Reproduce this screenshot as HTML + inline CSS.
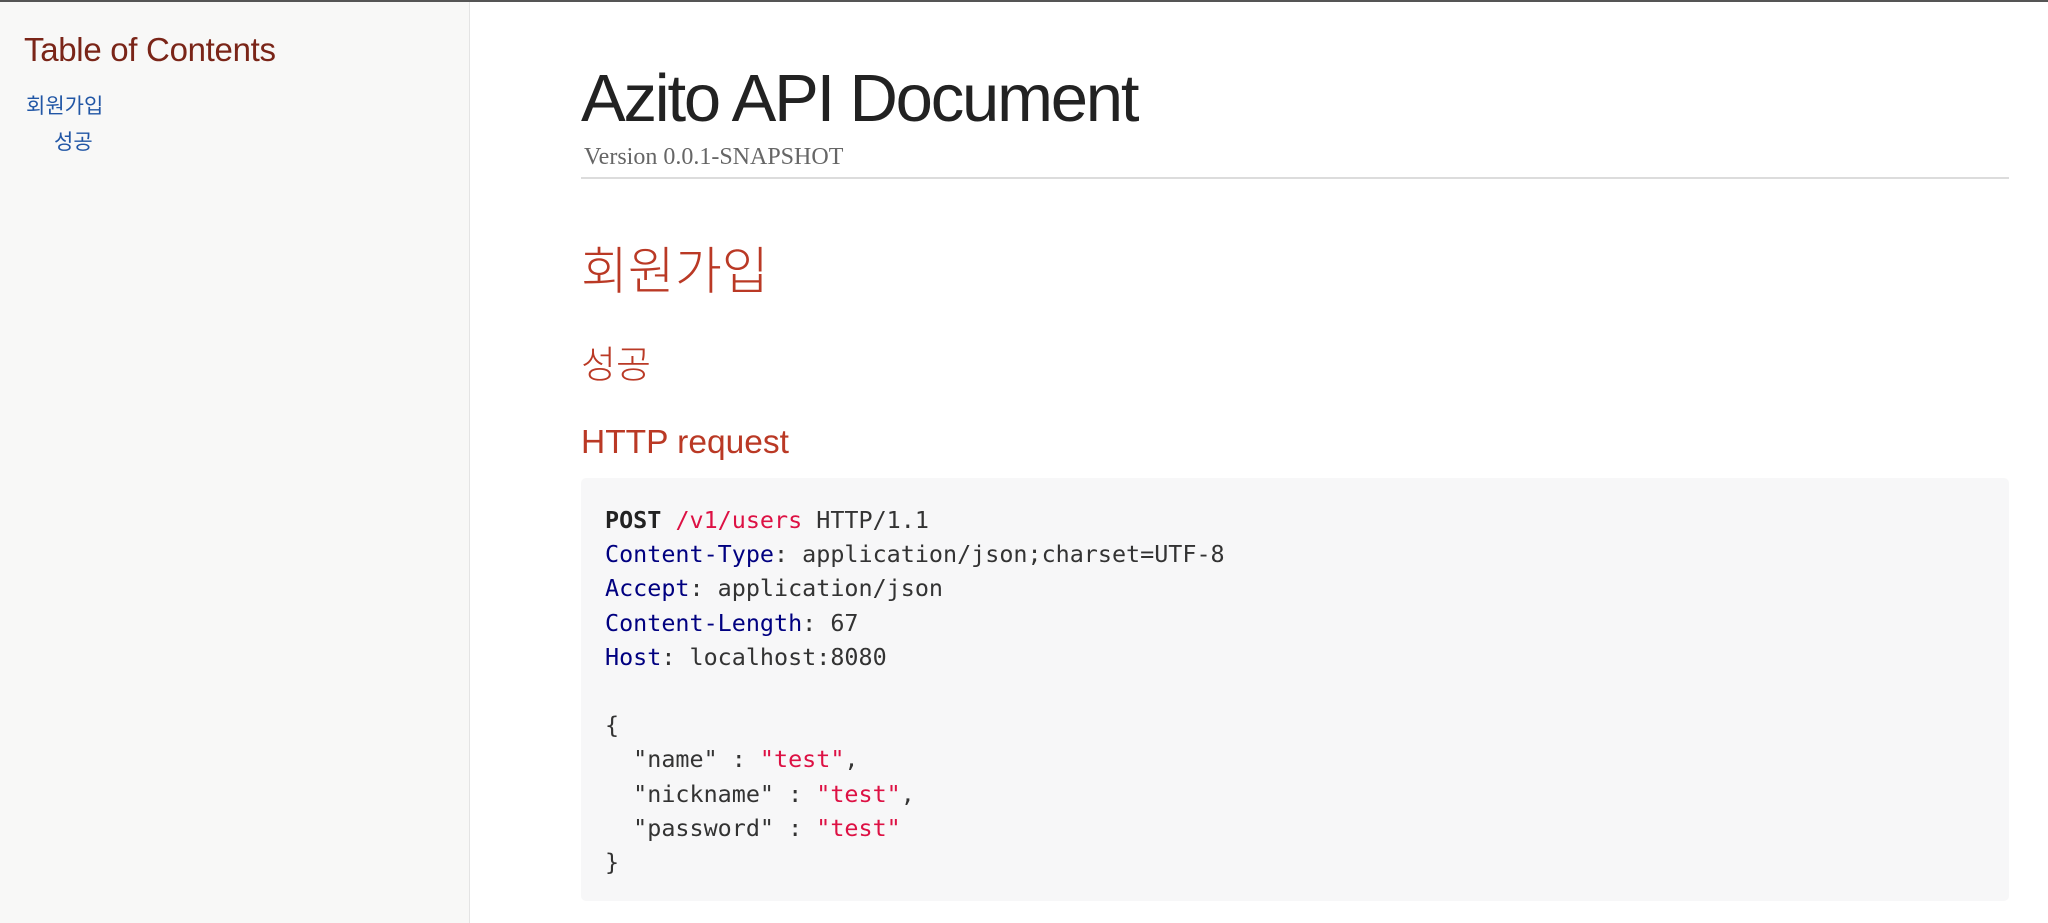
<!DOCTYPE html>
<html><head><meta charset="utf-8"><style>
html,body{margin:0;padding:0;width:2048px;height:923px;overflow:hidden;background:#fff;font-family:"Liberation Sans","Noto Sans CJK KR",sans-serif;}
.top{position:absolute;left:0;top:0;width:2048px;height:2px;background:#555;}
.side{position:absolute;left:0;top:2px;width:469px;height:921px;background:#f8f8f7;border-right:1px solid #e4e4e4;}
.side h2{position:absolute;left:24px;top:29px;margin:0;font-weight:normal;font-size:33px;color:#7a2518;letter-spacing:-0.3px;white-space:nowrap;}
.side a{position:absolute;color:#2156a5;font-size:21px;text-decoration:none;white-space:nowrap;}
.main{position:absolute;left:581px;top:0;width:1428px;}
h1{position:absolute;left:0;top:60px;margin:0;font-weight:300;font-size:67px;color:#222;white-space:nowrap;letter-spacing:-2.2px;}
.ver{position:absolute;left:3px;top:144px;font-family:"Liberation Serif",serif;font-size:24px;color:#666;white-space:nowrap;}
.hr{position:absolute;left:0;top:177px;width:1428px;height:2px;background:#dcdcdc;}
.h2{position:absolute;left:0;top:230px;font-size:51px;color:#ba3925;font-weight:300;white-space:nowrap;}
.h3{position:absolute;left:0;top:334px;font-size:38px;color:#ba3925;font-weight:300;white-space:nowrap;}
.h4{position:absolute;left:0;top:424px;font-size:33.5px;color:#ba3925;white-space:nowrap;}
pre{position:absolute;left:0;top:478px;width:1428px;height:423px;box-sizing:border-box;margin:0;background:#f7f7f8;border-radius:5px;padding:25px 24px 20px;font-family:"DejaVu Sans Mono","Liberation Mono",monospace;font-size:23.4px;line-height:34.2px;color:#333;}
.k{color:#000080}.s{color:#d14}.b{font-weight:bold;color:#222}
</style></head><body>
<div class="top"></div>
<div class="side">
<h2>Table of Contents</h2>
<a style="left:26px;top:88px">회원가입</a>
<a style="left:54px;top:124px">성공</a>
</div>
<div class="main">
<h1>Azito API Document</h1>
<div class="ver">Version 0.0.1-SNAPSHOT</div>
<div class="hr"></div>
<div class="h2">회원가입</div>
<div class="h3">성공</div>
<div class="h4">HTTP request</div>
<pre><span class="b">POST</span> <span class="s">/v1/users</span> HTTP/1.1
<span class="k">Content-Type</span>: application/json;charset=UTF-8
<span class="k">Accept</span>: application/json
<span class="k">Content-Length</span>: 67
<span class="k">Host</span>: localhost:8080

{
  "name" : <span class="s">"test"</span>,
  "nickname" : <span class="s">"test"</span>,
  "password" : <span class="s">"test"</span>
}</pre>
</div>
</body></html>
